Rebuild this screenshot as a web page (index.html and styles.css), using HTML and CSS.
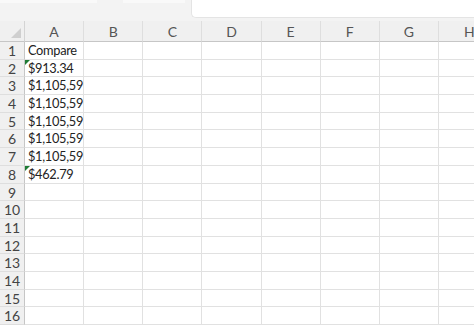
FILE: index.html
```html
<!DOCTYPE html>
<html lang="en">
<head>
    <meta charset="UTF-8">
    <meta name="viewport" content="width=device-width, initial-scale=1.0">
    <title>Sheet1</title>
    <link rel="stylesheet" href="styles.css">
</head>
<body>
    <div class="toolbar">
        <div class="tabs">
            <div class="tab tab-wide"></div>
            <div class="tab tab-narrow"></div>
        </div>
        <div class="formula-box"></div>
    </div>
    <div class="sheet" id="sheet">
        <div class="corner">
            <svg width="10" height="10" viewBox="0 0 10 10"><polygon points="10,0 10,10 0,10" fill="#cfcfcf"/></svg>
        </div>
        <div class="col-head">A</div>
        <div class="col-head">B</div>
        <div class="col-head">C</div>
        <div class="col-head">D</div>
        <div class="col-head">E</div>
        <div class="col-head">F</div>
        <div class="col-head">G</div>
        <div class="col-head col-last">H</div>
    </div>
    <script>
        // values for column A, the rest of the grid is empty
        const values = ['Compare', '$913.34', '$1,105,59', '$1,105,59', '$1,105,59', '$1,105,59', '$1,105,59', '$462.79'];
        const flagged = [2, 8]; // number stored as text
        const sheet = document.getElementById('sheet');

        for (let r = 1; r <= 16; r++) {
            const rowHead = document.createElement('div');
            rowHead.classList.add('row-head');
            rowHead.textContent = r;
            sheet.appendChild(rowHead);

            for (let c = 0; c < 8; c++) {
                const cell = document.createElement('div');
                cell.classList.add('cell');
                if (c === 7) cell.classList.add('cell-last');
                if (c === 0 && values[r - 1]) {
                    cell.textContent = values[r - 1];
                    if (flagged.includes(r)) cell.classList.add('flag');
                }
                sheet.appendChild(cell);
            }
        }
    </script>
</body>
</html>
```

FILE: styles.css
```css
body {
    margin: 0;
    padding: 0;
    width: 474px;
    height: 332px;
    overflow: hidden;
    background-color: #fff;
    font-family: Lato, "Open Sans", sans-serif;
}
.toolbar {
    height: 21px;
    background-color: #f3f3f3;
    display: flex;
    justify-content: space-between;
}
.tabs {
    display: flex;
    gap: 26px;
}
.tab {
    height: 3px;
    background-color: #f9f9f9;
}
.tab-wide {
    width: 97px;
}
.tab-narrow {
    width: 62px;
}
.formula-box {
    width: 282px;
    height: 17px;
    background-color: #fff;
    border-left: 1px solid #e4e4e4;
    border-bottom: 1px solid #e4e4e4;
    border-bottom-left-radius: 5px;
}
.sheet {
    display: grid;
    width: 474px;
    grid-template-columns: 25px repeat(7, 59.15px) 1fr;
    grid-template-rows: 21px repeat(16, 17.7px);
}
.corner {
    background-color: #f0f0f0;
    border-bottom: 1px solid #c6c6c6;
    border-right: 1px solid #d4d4d4;
    box-sizing: border-box;
    display: flex;
    align-items: flex-end;
    justify-content: flex-end;
    padding: 0 3px 3px 0;
}
.col-head {
    background-color: #f0f0f0;
    border-bottom: 1px solid #c6c6c6;
    border-right: 1px solid #dedede;
    box-sizing: border-box;
    color: #555;
    font-size: 14px;
    text-align: center;
    line-height: 21px;
}
.col-last {
    border-right: none;
    text-align: left;
    padding-left: 25px;
}
.row-head {
    background-color: #f0f0f0;
    border-right: 1px solid #c6c6c6;
    border-bottom: 1px solid #dedede;
    box-sizing: border-box;
    color: #444;
    font-size: 14px;
    text-align: center;
    line-height: 17px;
}
.cell {
    position: relative;
    border-right: 1px solid #e1e1e1;
    border-bottom: 1px solid #e1e1e1;
    box-sizing: border-box;
    color: #222;
    font-size: 12.8px;
    letter-spacing: -0.3px;
    line-height: 17px;
    padding-left: 3px;
    white-space: nowrap;
}
.cell-last {
    border-right: none;
}
.flag::before {
    content: "";
    position: absolute;
    top: 0;
    left: 0;
    border-top: 5px solid #1e7b34;
    border-right: 5px solid transparent;
}
```
